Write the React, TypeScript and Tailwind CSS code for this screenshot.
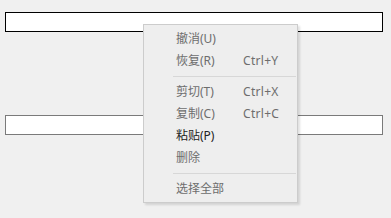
import React from "react";

type Item = { label: string; shortcut?: string; enabled?: boolean } | "sep";

const items: Item[] = [
    { label: "撤消(U)" },
    { label: "恢复(R)", shortcut: "Ctrl+Y" },
    "sep",
    { label: "剪切(T)", shortcut: "Ctrl+X" },
    { label: "复制(C)", shortcut: "Ctrl+C" },
    { label: "粘贴(P)", enabled: true },
    { label: "删除" },
    "sep",
    { label: "选择全部" },
];

export default function App() {
    return (
        <div
            className="relative w-[391px] h-[218px] bg-[#f0f0f0] overflow-hidden"
            style={{ fontFamily: '"Noto Sans", "Noto Sans CJK SC", sans-serif' }}
        >
            <div className="pt-[12px] px-[5px]">
                <div className="w-[378px] h-[20px] bg-white border border-black" />
                <div className="w-[378px] h-[20px] mt-[83px] bg-white border border-[#7a7a7a]" />
            </div>

            {/* context menu */}
            <div className="absolute left-[143px] top-[24px] w-[155px] bg-[#eeeeee] border border-[#cccccc] shadow-[2px_2px_2px_rgba(0,0,0,0.12)] pt-[3px] pb-[2px]">
                {items.map((it, i) =>
                    it === "sep" ? (
                        <div key={i} className="py-[4px] pl-[29px] pr-[1px]">
                            <div className="h-px bg-[#d7d7d7]" />
                        </div>
                    ) : (
                        <div
                            key={i}
                            className={
                                "flex items-center h-[22px] pl-[32px] text-[12px] leading-none " +
                                (it.enabled ? "text-[#222222]" : "text-[#6d6d6d]")
                            }
                        >
                            <span className="w-[67px]">{it.label}</span>
                            {it.shortcut && <span className="tracking-[0.3px]">{it.shortcut}</span>}
                        </div>
                    )
                )}
            </div>
        </div>
    );
}
